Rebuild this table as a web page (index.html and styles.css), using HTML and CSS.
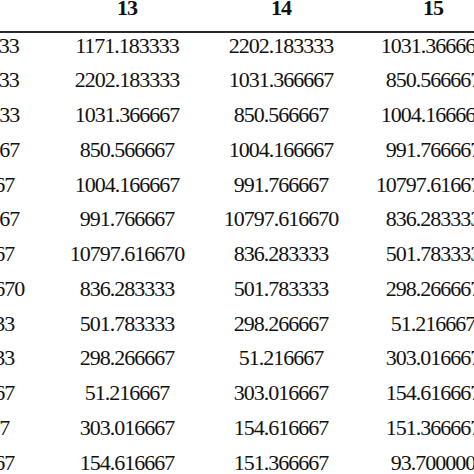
FILE: index.html
```html
<!DOCTYPE html>
<html>
<head>
<meta charset="utf-8">
<link rel="stylesheet" href="styles.css">
</head>
<body>
<div class="page">
  <div class="table">
    <div class="row head">
      <div class="cell">12</div><div class="cell">13</div><div class="cell">14</div><div class="cell">15</div>
    </div>
    <div class="row"><div class="cell">1181.183333</div><div class="cell">1171.183333</div><div class="cell">2202.183333</div><div class="cell">1031.366667</div></div>
    <div class="row"><div class="cell">1171.183333</div><div class="cell">2202.183333</div><div class="cell">1031.366667</div><div class="cell">850.566667</div></div>
    <div class="row"><div class="cell">2202.183333</div><div class="cell">1031.366667</div><div class="cell">850.566667</div><div class="cell">1004.166667</div></div>
    <div class="row"><div class="cell">1031.366667</div><div class="cell">850.566667</div><div class="cell">1004.166667</div><div class="cell">991.766667</div></div>
    <div class="row"><div class="cell">850.566667</div><div class="cell">1004.166667</div><div class="cell">991.766667</div><div class="cell">10797.616670</div></div>
    <div class="row"><div class="cell">1004.166667</div><div class="cell">991.766667</div><div class="cell">10797.616670</div><div class="cell">836.283333</div></div>
    <div class="row"><div class="cell">991.766667</div><div class="cell">10797.616670</div><div class="cell">836.283333</div><div class="cell">501.783333</div></div>
    <div class="row"><div class="cell">10797.616670</div><div class="cell">836.283333</div><div class="cell">501.783333</div><div class="cell">298.266667</div></div>
    <div class="row"><div class="cell">836.283333</div><div class="cell">501.783333</div><div class="cell">298.266667</div><div class="cell">51.216667</div></div>
    <div class="row"><div class="cell">501.783333</div><div class="cell">298.266667</div><div class="cell">51.216667</div><div class="cell">303.016667</div></div>
    <div class="row"><div class="cell">298.266667</div><div class="cell">51.216667</div><div class="cell">303.016667</div><div class="cell">154.616667</div></div>
    <div class="row"><div class="cell">51.216667</div><div class="cell">303.016667</div><div class="cell">154.616667</div><div class="cell">151.366667</div></div>
    <div class="row"><div class="cell">303.016667</div><div class="cell">154.616667</div><div class="cell">151.366667</div><div class="cell">93.700000</div></div>
  </div>
</div>
</body>
</html>
```
FILE: styles.css
```css
html, body {
  margin: 0;
  padding: 0;
  background: #ffffff;
}
.page {
  width: 474px;
  height: 474px;
  overflow: hidden;
}
.table {
  margin-left: -113px;
  width: 624px;
  font-family: "Liberation Serif", "Times New Roman", serif;
  font-size: 22px;
  letter-spacing: -1px;
  color: #111111;
}
.row {
  display: grid;
  grid-template-columns: 160px 160px 148px 156px;
  line-height: 25px;
  padding-bottom: 9.75px;
}
.cell {
  text-align: center;
  white-space: nowrap;
}
.row.head {
  font-weight: bold;
  line-height: 15px;
  padding-bottom: 15.5px;
  border-bottom: 2px solid #2a2a2a;
}
```
